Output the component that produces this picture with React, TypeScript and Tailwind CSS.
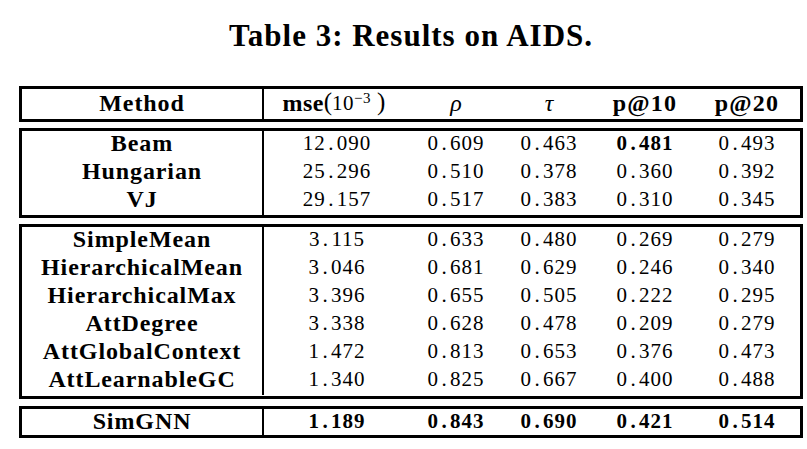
type Row = { method: string; vals: string[]; bold?: boolean[] };

const grid = "grid grid-cols-[242px_146px_92px_94px_98px_106px]";

const baselines: Row[] = [
  { method: "Beam", vals: ["12.090", "0.609", "0.463", "0.481", "0.493"], bold: [false, false, false, true, false] },
  { method: "Hungarian", vals: ["25.296", "0.510", "0.378", "0.360", "0.392"] },
  { method: "VJ", vals: ["29.157", "0.517", "0.383", "0.310", "0.345"] },
];

const variants: Row[] = [
  { method: "SimpleMean", vals: ["3.115", "0.633", "0.480", "0.269", "0.279"] },
  { method: "HierarchicalMean", vals: ["3.046", "0.681", "0.629", "0.246", "0.340"] },
  { method: "HierarchicalMax", vals: ["3.396", "0.655", "0.505", "0.222", "0.295"] },
  { method: "AttDegree", vals: ["3.338", "0.628", "0.478", "0.209", "0.279"] },
  { method: "AttGlobalContext", vals: ["1.472", "0.813", "0.653", "0.376", "0.473"] },
  { method: "AttLearnableGC", vals: ["1.340", "0.825", "0.667", "0.400", "0.488"] },
];

const ours: Row = {
  method: "SimGNN",
  vals: ["1.189", "0.843", "0.690", "0.421", "0.514"],
  bold: [true, true, true, true, true],
};

// numbers keep the dot as wide as a digit, like the paper's figures
function Num({ v, bold }: { v: string; bold?: boolean }) {
  const [a, b] = v.split(".");
  return (
    <span className={bold ? "font-bold" : "font-normal"}>
      {a}
      <span className="inline-block w-[11px] text-center">.</span>
      {b}
    </span>
  );
}

function TableRow({ row, tall }: { row: Row; tall?: boolean }) {
  return (
    <div className={tall ? `${grid} h-[28px]` : `${grid} h-[26px]`}>
      <div className="border-r-2 border-black text-center font-bold text-[24px] tracking-[0.9px] leading-[24px]">
        {row.method}
      </div>
      {row.vals.map((v, i) => (
        <div key={i} className="text-center text-[21px] tracking-[1px] leading-[24px]">
          <Num v={v} bold={row.bold?.[i]} />
        </div>
      ))}
    </div>
  );
}

export default function App() {
  return (
    <div className="min-h-screen w-[807px] bg-white text-black [font-family:Liberation_Serif,Times_New_Roman,serif]">
      <div className="ml-[19px] w-[784px]">
        <h1 className="pt-[20px] text-center font-bold text-[31px] leading-[31px] tracking-[1px]">
          Table 3: Results on AIDS.
        </h1>

        {/* header */}
        <div className="mt-[35px] border-[3px] border-black">
          <div className={`${grid} h-[30px] leading-[28px]`}>
            <div className="border-r-2 border-black text-center font-bold text-[24px] tracking-[0.9px]">
              Method
            </div>
            <div className="flex items-start justify-center pr-[6px]">
              <span className="font-bold text-[24px] tracking-[0.4px]">mse</span>
              <span className="text-[25px] leading-[26px]">(</span>
              <span className="text-[21px] tracking-[0.5px]">10</span>
              <span className="text-[15px] leading-[18px] tracking-[0.5px]">−3</span>
              <span className="ml-[6px] text-[25px] leading-[26px]">)</span>
            </div>
            <div className="text-center italic text-[24px]">ρ</div>
            <div className="text-center italic text-[24px]">τ</div>
            <div className="text-center font-bold text-[24px] tracking-[1.2px]">p@10</div>
            <div className="text-center font-bold text-[24px] tracking-[1.2px]">p@20</div>
          </div>
        </div>

        {/* baselines */}
        <div className="mt-[6px] border-[3px] border-black">
          {baselines.map((r) => (
            <TableRow key={r.method} row={r} tall />
          ))}
        </div>

        {/* simgnn variants */}
        <div className="mt-[6px] border-[3px] border-black pb-[1px]">
          {variants.map((r) => (
            <TableRow key={r.method} row={r} tall />
          ))}
        </div>

        {/* full model */}
        <div className="mt-[7px] border-[3px] border-black">
          <TableRow row={ours} />
        </div>
      </div>
    </div>
  );
}
